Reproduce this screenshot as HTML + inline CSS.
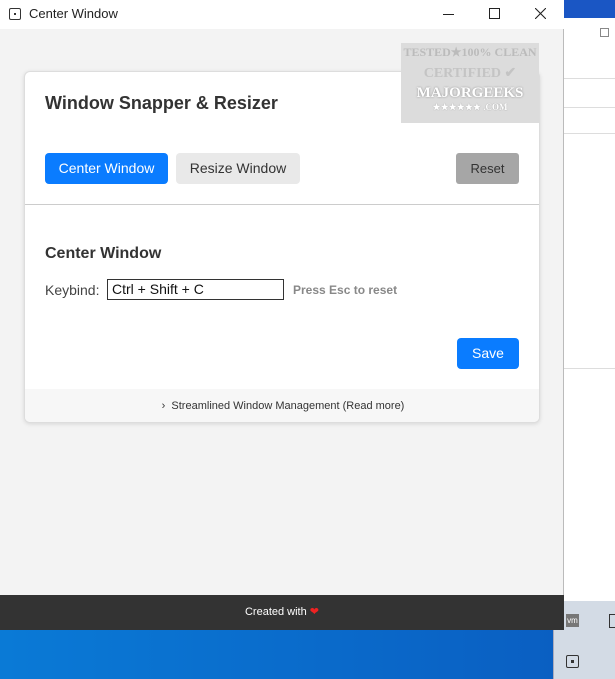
<!DOCTYPE html>
<html><head><style>
*{box-sizing:border-box;margin:0;padding:0}
body{width:615px;height:679px;overflow:hidden;position:relative;background:#fff;font-family:"Liberation Sans",sans-serif}
.abs{position:absolute}
</style></head><body>
<div class="abs" style="left:564px;top:0;width:51px;height:679px;background:#fff"></div>
<div class="abs" style="left:564px;top:0;width:51px;height:18px;background:#1a56c4"></div>
<div class="abs" style="left:600px;top:28px;width:9px;height:9px;border:1px solid #888"></div>
<div class="abs" style="left:564px;top:78px;width:51px;height:1px;background:#ddd"></div>
<div class="abs" style="left:564px;top:107px;width:51px;height:1px;background:#ddd"></div>
<div class="abs" style="left:564px;top:133px;width:51px;height:1px;background:#ddd"></div>
<div class="abs" style="left:564px;top:368px;width:51px;height:1px;background:#ddd"></div>
<div class="abs" style="left:0;top:630px;width:615px;height:49px;background:linear-gradient(90deg,#0a7ad6,#0a5cc0)"></div>
<div class="abs" style="left:553px;top:601px;width:62px;height:78px;background:#d3dbe5;border-left:1px solid #aab"></div>
<div class="abs" style="left:566px;top:614px;width:13px;height:13px;background:#777;color:#fff;font-size:8px;line-height:13px;text-align:center">vm</div>
<div class="abs" style="left:609px;top:614px;width:8px;height:14px;border:1px solid #333"></div>
<div class="abs" style="left:566px;top:655px;width:13px;height:13px;border:1.5px solid #333;border-radius:2px"><div class="abs" style="left:4px;top:4px;width:3px;height:3px;background:#333"></div></div>
<div class="abs" style="left:0;top:0;width:564px;height:630px;background:#f3f3f3;border-right:1px solid #bbb"></div>
<div class="abs" style="left:0;top:0;width:564px;height:29px;background:#fff"></div>
<div class="abs" style="left:9px;top:8px;width:12px;height:12px;border:1.5px solid #333;border-radius:2px"><div class="abs" style="left:3.5px;top:3.5px;width:2px;height:2px;background:#333"></div></div>
<div class="abs" style="left:29px;top:6px;font-size:13px;color:#222">Center Window</div>
<div class="abs" style="left:443px;top:14px;width:11px;height:1px;background:#222"></div>
<div class="abs" style="left:489px;top:8px;width:11px;height:11px;border:1px solid #222"></div>
<svg class="abs" style="left:535px;top:8px" width="11" height="11"><path d="M0 0L11 11M11 0L0 11" stroke="#222" stroke-width="1.1"/></svg>
<div class="abs" style="left:24px;top:71px;width:516px;height:352px;background:#fff;border:1px solid #ddd;border-radius:6px;box-shadow:0 1px 4px rgba(0,0,0,.12);overflow:hidden">
<div class="abs" style="left:20px;top:21px;font-size:18px;font-weight:bold;color:#333">Window Snapper &amp; Resizer</div>
<div class="abs" style="left:20px;top:81px;width:123px;height:31px;background:#0a7cff;border-radius:4px;color:#fff;font-size:14px;line-height:31px;text-align:center">Center Window</div>
<div class="abs" style="left:151px;top:81px;width:124px;height:31px;background:#e9e9e9;border-radius:4px;color:#333;font-size:14px;line-height:31px;text-align:center">Resize Window</div>
<div class="abs" style="left:431px;top:81px;width:63px;height:31px;background:#a6a6a6;border-radius:3px;color:#333;font-size:13px;line-height:31px;text-align:center">Reset</div>
<div class="abs" style="left:0;top:132px;width:516px;height:1px;background:#ccc"></div>
<div class="abs" style="left:20px;top:173px;font-size:16px;font-weight:bold;color:#333">Center Window</div>
<div class="abs" style="left:20px;top:210px;font-size:14px;color:#444">Keybind:</div>
<div class="abs" style="left:82px;top:207px;width:177px;height:21px;border:1px solid #333;font-size:14px;color:#111;padding-left:4px;line-height:19px">Ctrl + Shift + C</div>
<div class="abs" style="left:268px;top:211px;font-size:12px;font-weight:bold;color:#888">Press Esc to reset</div>
<div class="abs" style="left:432px;top:266px;width:62px;height:31px;background:#0a7cff;border-radius:4px;color:#fff;font-size:14px;line-height:31px;text-align:center">Save</div>
<div class="abs" style="left:0;top:317px;width:516px;height:35px;background:#f7f7f7;font-size:11px;color:#333;text-align:center;line-height:34px">›&nbsp;&nbsp;Streamlined Window Management (Read more)</div>
</div>
<div class="abs" style="left:401px;top:43px;width:138px;height:80px;background:#dcdcdc;color:#fff;font-family:'Liberation Serif',serif;font-weight:bold;text-align:center;overflow:hidden">
<div style="font-size:12px;margin-top:2px;color:#bbb;white-space:nowrap">TESTED★100% CLEAN</div>
<div style="font-size:14px;margin-top:5px;color:#c4c4c4">CERTIFIED ✔</div>
<div style="font-size:15px;margin-top:3px;color:#fff;text-shadow:0 0 2px #888">MAJORGEEKS</div>
<div style="font-size:9px;color:#fff;text-shadow:0 0 1px #888">★★★★★★ .COM</div></div>
<div class="abs" style="left:0;top:595px;width:564px;height:35px;background:#333;color:#fff;font-size:11px;text-align:center;line-height:35px">Created with <span style="color:#e22">❤</span></div>
</body></html>
